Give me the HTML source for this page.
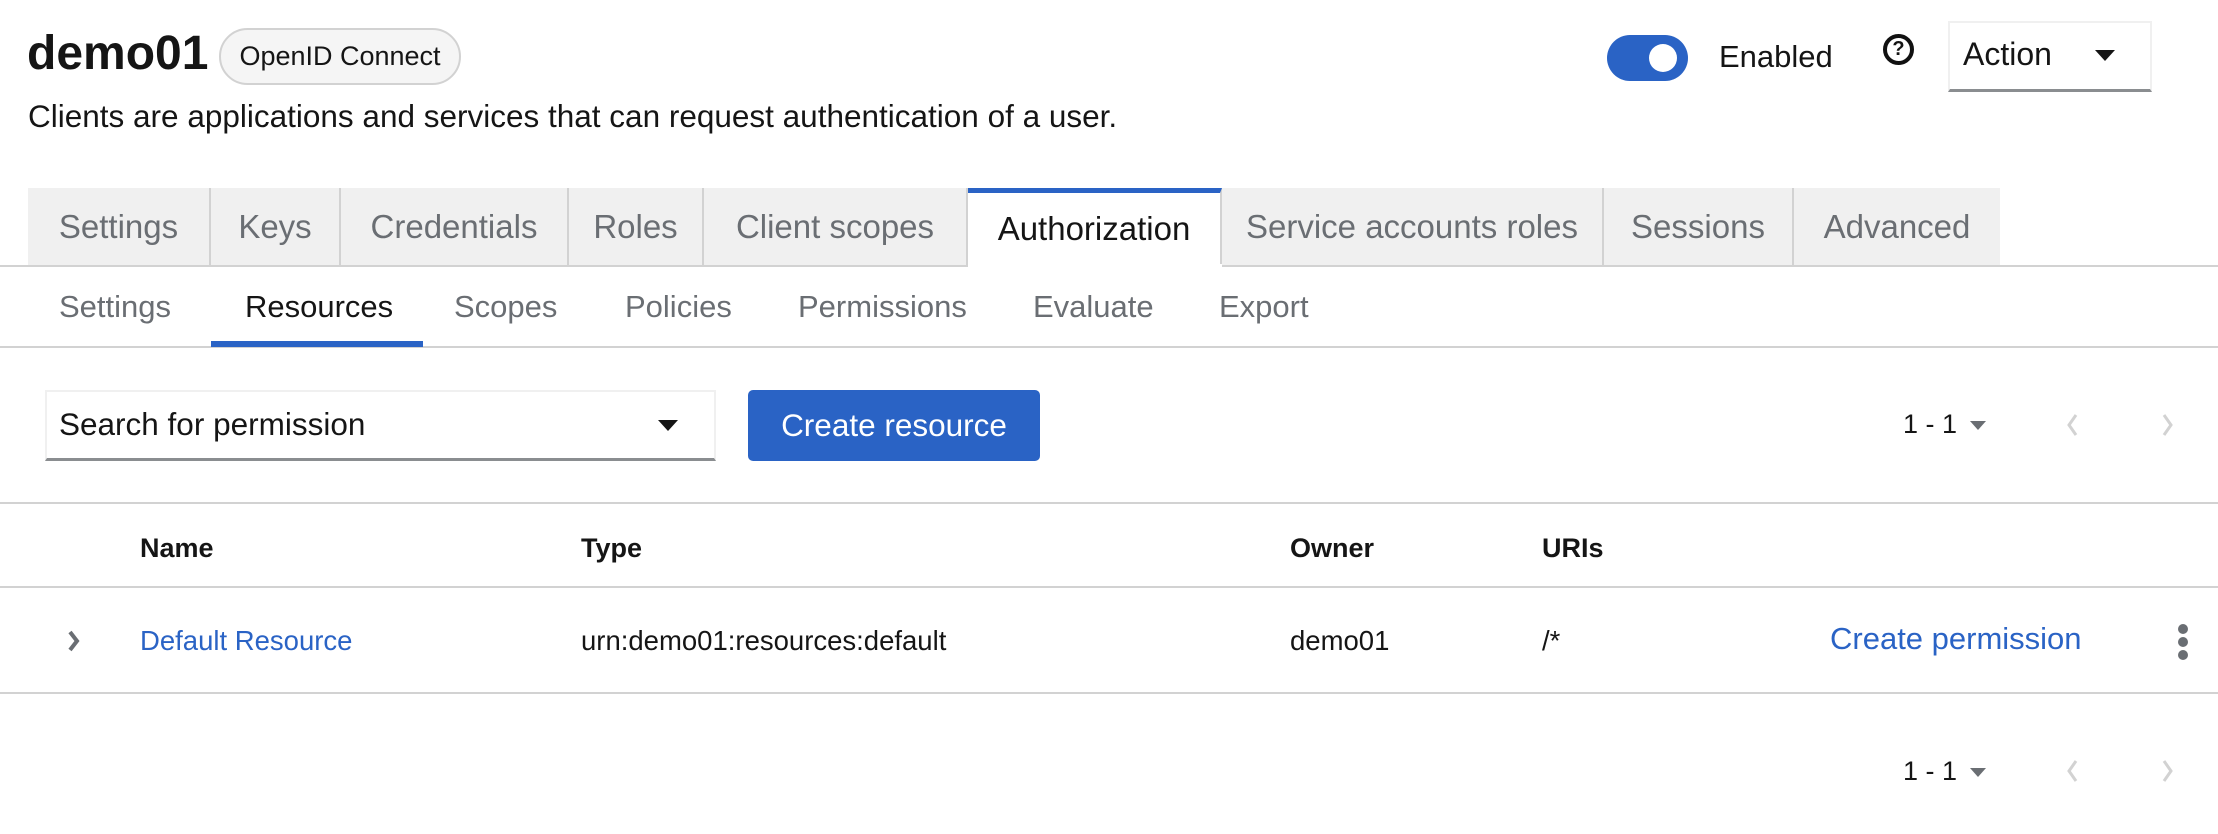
<!DOCTYPE html>
<html><head><meta charset="utf-8"><style>
*{margin:0;padding:0;box-sizing:border-box}
body{width:2218px;height:834px;background:#fff;font-family:"Liberation Sans",sans-serif;color:#151515;position:relative;overflow:hidden}
.a{position:absolute;white-space:nowrap}
.tab{position:absolute;top:188px;height:78px;background:#f0f0f0;border-right:2px solid #d2d2d2;color:#6a6e73;font-size:33px;line-height:78px;text-align:center}
.st{position:absolute;top:289px;font-size:31px;color:#6a6e73}
.hline{position:absolute;left:0;width:2218px;height:2px;background:#d2d2d2}
.th{position:absolute;top:533px;font-size:27px;font-weight:bold}
.td{position:absolute;top:625px;font-size:27.5px}
</style></head><body>
<div class="a" style="left:27px;top:26px;font-size:48px;font-weight:bold">demo01</div>
<div class="a" style="left:219px;top:28px;width:242px;height:57px;border:2px solid #d2d2d2;border-radius:29px;background:#f5f5f5;font-size:27px;line-height:53px;text-align:center">OpenID Connect</div>
<div class="a" style="left:28px;top:98px;font-size:31.5px">Clients are applications and services that can request authentication of a user.</div>

<div class="a" style="left:1607px;top:35px;width:81px;height:46px;border-radius:23px;background:#2a63c5"></div>
<div class="a" style="left:1649px;top:44px;width:28px;height:28px;border-radius:50%;background:#fff"></div>
<div class="a" style="left:1719px;top:39px;font-size:31px">Enabled</div>
<div class="a" style="left:1883px;top:34px;width:31px;height:31px;border:4px solid #111;border-radius:50%;font-size:20px;font-weight:bold;line-height:23px;text-align:center">?</div>
<div class="a" style="left:1948px;top:21px;width:204px;height:71px;border:2px solid #f0f0f0;border-bottom:3px solid #8a8d90"></div>
<div class="a" style="left:1963px;top:36px;font-size:32px">Action</div>
<div class="a" style="left:2095px;top:50px;width:0;height:0;border-left:10px solid transparent;border-right:10px solid transparent;border-top:11px solid #151515"></div>

<div class="tab" style="left:28px;width:183px">Settings</div>
<div class="tab" style="left:211px;width:130px">Keys</div>
<div class="tab" style="left:341px;width:228px">Credentials</div>
<div class="tab" style="left:569px;width:135px">Roles</div>
<div class="tab" style="left:704px;width:264px">Client scopes</div>
<div class="tab" style="left:968px;width:254px;background:#fff;color:#151515;border-top:5px solid #2a63c5;line-height:72px;height:80px;border-right:2px solid #d2d2d2">Authorization</div>
<div class="tab" style="left:1222px;width:382px">Service accounts roles</div>
<div class="tab" style="left:1604px;width:190px">Sessions</div>
<div class="tab" style="left:1794px;width:206px;border-right:none">Advanced</div>
<div class="hline" style="top:265px"></div>
<div class="a" style="left:968px;top:264px;width:254px;height:4px;background:#fff"></div>

<div class="st" style="left:59px">Settings</div>
<div class="st" style="left:245px;color:#151515">Resources</div>
<div class="st" style="left:454px">Scopes</div>
<div class="st" style="left:625px">Policies</div>
<div class="st" style="left:798px">Permissions</div>
<div class="st" style="left:1033px">Evaluate</div>
<div class="st" style="left:1219px">Export</div>
<div class="hline" style="top:346px"></div>
<div class="a" style="left:211px;top:341px;width:212px;height:6px;background:#2a63c5"></div>

<div class="a" style="left:45px;top:390px;width:671px;height:71px;border:2px solid #f0f0f0;border-bottom:3px solid #8a8d90"></div>
<div class="a" style="left:59px;top:406px;font-size:31.5px">Search for permission</div>
<div class="a" style="left:658px;top:420px;width:0;height:0;border-left:10px solid transparent;border-right:10px solid transparent;border-top:11px solid #151515"></div>
<div class="a" style="left:748px;top:390px;width:292px;height:71px;background:#2a63c5;border-radius:5px;color:#fff;font-size:31.5px;line-height:71px;text-align:center">Create resource</div>

<div class="a" style="left:1903px;top:409px;font-size:27px">1 - 1</div>
<div class="a" style="left:1970px;top:421px;border-left:8px solid transparent;border-right:8px solid transparent;border-top:9px solid #6a6e73"></div>
<svg class="a" style="left:2064px;top:412px" width="16" height="26"><path d="M12 3 L5 13 L12 23" stroke="#d2d2d2" stroke-width="3" fill="none"/></svg>
<svg class="a" style="left:2160px;top:412px" width="16" height="26"><path d="M4 3 L11 13 L4 23" stroke="#d2d2d2" stroke-width="3" fill="none"/></svg>

<div class="hline" style="top:502px"></div>
<div class="th" style="left:140px">Name</div>
<div class="th" style="left:581px">Type</div>
<div class="th" style="left:1290px">Owner</div>
<div class="th" style="left:1542px">URIs</div>
<div class="hline" style="top:586px"></div>
<svg class="a" style="left:67px;top:629px" width="14" height="24"><path d="M3 3 L10 12 L3 21" stroke="#6a6e73" stroke-width="4" fill="none"/></svg>
<div class="td" style="left:140px;color:#2a63c5">Default Resource</div>
<div class="td" style="left:581px">urn:demo01:resources:default</div>
<div class="td" style="left:1290px">demo01</div>
<div class="td" style="left:1542px">/*</div>
<div class="td" style="left:1830px;top:621px;font-size:31px;color:#2a63c5">Create permission</div>
<div class="a" style="left:2178px;top:624px;width:10px;height:10px;border-radius:50%;background:#6a6e73;box-shadow:0 13px 0 #6a6e73,0 26px 0 #6a6e73"></div>
<div class="hline" style="top:692px"></div>

<div class="a" style="left:1903px;top:756px;font-size:27px">1 - 1</div>
<div class="a" style="left:1970px;top:768px;border-left:8px solid transparent;border-right:8px solid transparent;border-top:9px solid #6a6e73"></div>
<svg class="a" style="left:2064px;top:758px" width="16" height="26"><path d="M12 3 L5 13 L12 23" stroke="#d2d2d2" stroke-width="3" fill="none"/></svg>
<svg class="a" style="left:2160px;top:758px" width="16" height="26"><path d="M4 3 L11 13 L4 23" stroke="#d2d2d2" stroke-width="3" fill="none"/></svg>
</body></html>
